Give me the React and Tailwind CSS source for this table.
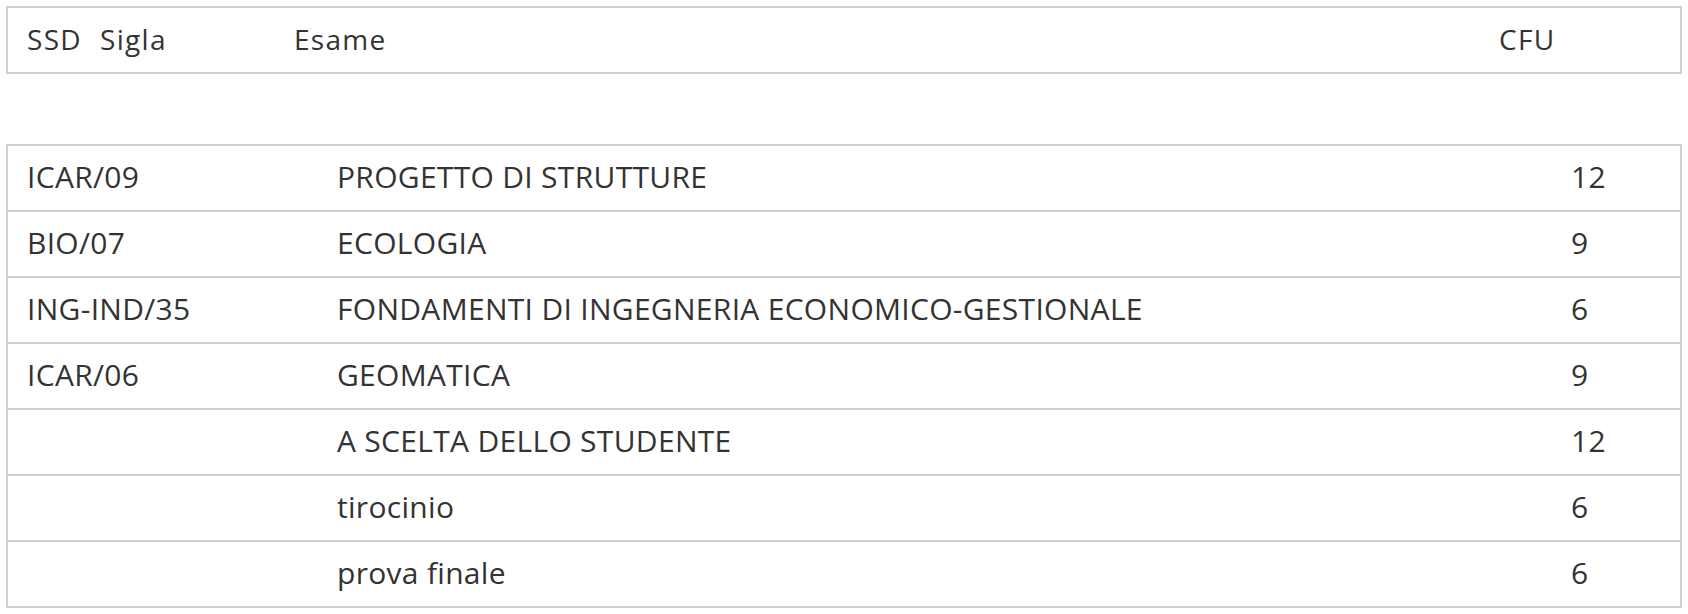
import React from "react";

const rows = [
  ["ICAR/09", "PROGETTO DI STRUTTURE", "12"],
  ["BIO/07", "ECOLOGIA", "9"],
  ["ING-IND/35", "FONDAMENTI DI INGEGNERIA ECONOMICO-GESTIONALE", "6"],
  ["ICAR/06", "GEOMATICA", "9"],
  ["", "A SCELTA DELLO STUDENTE", "12"],
  ["", "tirocinio", "6"],
  ["", "prova finale", "6"],
];

export default function App() {
  return (
    <div
      className="w-[1688px] h-[614px] bg-white p-[6px] text-[#333333]"
      style={{ fontFamily: '"Open Sans", "Liberation Sans", sans-serif' }}
    >
      <div className="h-[68px] border-2 border-[#d0d0d0] flex items-center pb-[2px] text-[28px] tracking-[1.3px] leading-none">
        <span className="ml-[19px] w-[73px]">SSD</span>
        <span className="w-[194px]">Sigla</span>
        <span className="w-[1205px]">Esame</span>
        <span>CFU</span>
      </div>
      <div className="mt-[70px] border-2 border-[#d0d0d0] text-[30px] tracking-[0.3px] leading-none">
        {rows.map((r, i) => (
          <div
            key={i}
            className={
              "grid grid-cols-[329px_1234px_1fr] items-center pb-[2px]" +
              (i > 0 ? " border-t-2 border-[#d0d0d0] h-[66px]" : " h-[64px]")
            }
          >
            <span className="pl-[19px]">{r[0]}</span>
            <span>{r[1]}</span>
            <span>{r[2]}</span>
          </div>
        ))}
      </div>
    </div>
  );
}
